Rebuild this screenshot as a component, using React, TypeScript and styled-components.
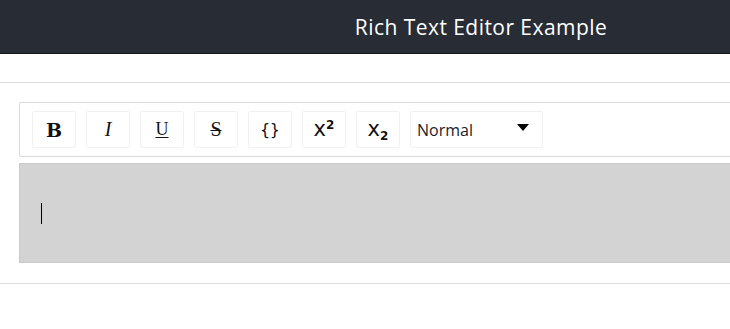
import React from "react";
import styled, { createGlobalStyle } from "styled-components";

const GlobalStyle = createGlobalStyle`
  html, body {
    margin: 0;
    padding: 0;
    background: #ffffff;
    overflow: hidden;
  }
  body {
    font-family: "Open Sans", "Noto Sans", sans-serif;
  }
`;

const Page = styled.div`
  width: 962px;
`;

const Header = styled.header`
  height: 53px;
  background: #282c34;
  border-bottom: 1px solid #15171b;
  display: flex;
  align-items: center;
  justify-content: center;
  color: #ffffff;
  font-size: 21px;
  letter-spacing: 0.45px;
`;

const Rule = styled.div<{ $top: number }>`
  height: 1px;
  background: #dcdcdc;
  margin-top: ${(p) => p.$top}px;
`;

const EditorWrap = styled.div`
  margin: 19px 19px 0 19px;
`;

const Toolbar = styled.div`
  display: flex;
  align-items: center;
  gap: 10px;
  padding: 8px 12px;
  border: 1px solid #d9d9d9;
  border-radius: 2px;
  background: #ffffff;
`;

const OptionButton = styled.button<{ $font?: string; $size?: number; $weight?: number; $italic?: boolean }>`
  width: 44px;
  height: 37px;
  padding: 0;
  display: flex;
  align-items: center;
  justify-content: center;
  background: #ffffff;
  border: 1px solid #f1f1f1;
  border-radius: 2px;
  color: #111111;
  font-family: ${(p) => p.$font || '"Liberation Serif", serif'};
  font-size: ${(p) => p.$size || 17}px;
  font-weight: ${(p) => p.$weight || 400};
  font-style: ${(p) => (p.$italic ? "italic" : "normal")};
  cursor: pointer;
`;

const Glyph = styled.span`
  display: inline-block;
  line-height: 1;

  sup,
  sub {
    font-size: 12px;
    font-weight: 600;
    line-height: 0;
  }
  sup {
    vertical-align: 7px;
  }
  sub {
    vertical-align: -4px;
  }
`;

const Underlined = styled.span`
  text-decoration: underline;
  text-decoration-thickness: 1px;
  text-underline-offset: 2px;
`;

const Struck = styled.span`
  text-decoration: line-through;
  text-decoration-thickness: 1px;
`;

const Dropdown = styled.div`
  width: 133px;
  height: 37px;
  box-sizing: border-box;
  display: flex;
  align-items: center;
  justify-content: space-between;
  padding: 0 13px 0 6px;
  border: 1px solid #f1f1f1;
  border-radius: 2px;
  color: #1c1c2a;
  font-size: 16px;
`;

const Caret = styled.span`
  width: 0;
  height: 0;
  border-left: 6px solid transparent;
  border-right: 6px solid transparent;
  border-top: 7px solid #000000;
  margin-bottom: 4px;
`;

const EditorArea = styled.div`
  margin-top: 6px;
  height: 100px;
  box-sizing: border-box;
  background: #d3d3d3;
  border: 1px solid #cbcbcb;
  padding: 39px 21px;
`;

const TextCursor = styled.span`
  display: block;
  width: 1px;
  height: 21px;
  background: #000000;
`;

export default function App() {
  return (
    <Page>
      <GlobalStyle />
      <Header>Rich Text Editor Example</Header>
      <Rule $top={28} />
      <EditorWrap>
        <Toolbar>
          <OptionButton $font='"DejaVu Serif", serif' $weight={700} $size={19}>B</OptionButton>
          <OptionButton $italic $size={20}>I</OptionButton>
          <OptionButton $size={18}><Underlined>U</Underlined></OptionButton>
          <OptionButton $size={20}><Struck>S</Struck></OptionButton>
          <OptionButton $font='"DejaVu Sans Mono", monospace' $weight={400} $size={16}>{"{}"}</OptionButton>
          <OptionButton $font='"DejaVu Sans", sans-serif' $weight={400} $size={21}>
            <Glyph>x<sup>2</sup></Glyph>
          </OptionButton>
          <OptionButton $font='"DejaVu Sans", sans-serif' $weight={400} $size={21}>
            <Glyph>x<sub>2</sub></Glyph>
          </OptionButton>
          <Dropdown>
            <span>Normal</span>
            <Caret />
          </Dropdown>
        </Toolbar>
        <EditorArea>
          <TextCursor />
        </EditorArea>
      </EditorWrap>
      <Rule $top={20} />
    </Page>
  );
}
